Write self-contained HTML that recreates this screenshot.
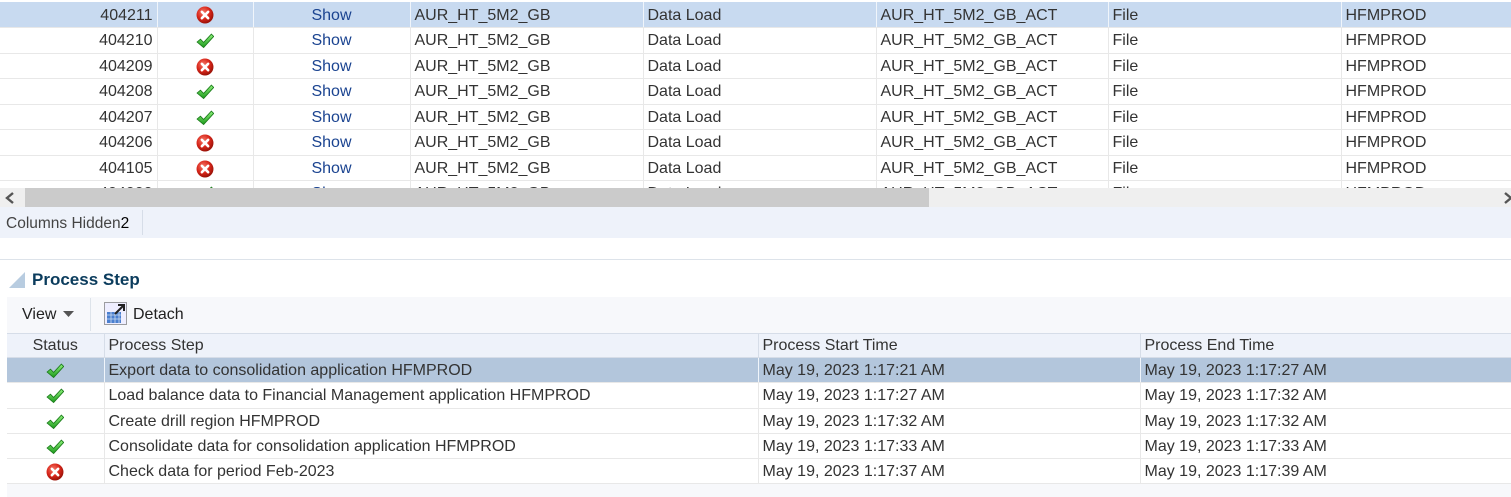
<!DOCTYPE html>
<html><head><meta charset="utf-8"><style>
*{margin:0;padding:0;box-sizing:border-box}
body{width:1511px;height:497px;overflow:hidden;background:#fff;font-family:Tahoma,"DejaVu Sans","Liberation Sans",sans-serif;font-size:15px;color:#333;position:relative}
.a{position:absolute}
table{border-collapse:collapse;table-layout:fixed;position:absolute}
td{white-space:nowrap;overflow:hidden;padding:1px 4px 0;border-right:1px solid #e8e8e8;border-bottom:1px solid #e8e8e8;height:25.5px;line-height:23px;font-family:"Liberation Sans",sans-serif;font-size:16px}
.r{text-align:right}.c{text-align:center}
.show{color:#1a4390}
.sel td{background:#c8daf0;border-right-color:#f0f5fb}
.ico{display:inline-block;width:18px;height:18px;vertical-align:middle}
.bt td{height:25.3px}
.bt .sel td{background:#b3c6dc}
.bt th{font-weight:normal;text-align:left;padding:1px 4px 0;height:24px;line-height:22px;background:#eef2fa;border-right:1px solid #d6dde8;border-bottom:1px solid #d6dde8;border-top:1px solid #d6dde8;font-family:"Liberation Sans",sans-serif;font-size:16px}
</style></head><body>
<svg width="0" height="0" style="position:absolute"><defs>
<radialGradient id="rg" cx="40%" cy="35%" r="65%"><stop offset="0" stop-color="#f57a6a"/><stop offset="0.6" stop-color="#d8261a"/><stop offset="1" stop-color="#9a1208"/></radialGradient>
<linearGradient id="gg" x1="0" y1="0" x2="0" y2="1"><stop offset="0" stop-color="#8ef07a"/><stop offset="1" stop-color="#1c9a1c"/></linearGradient>
<symbol id="x" viewBox="0 0 17 17"><circle cx="8.5" cy="8.5" r="8" fill="url(#rg)"/><path d="M5.5 5.5l6 6M11.5 5.5l-6 6" stroke="#fff" stroke-width="2.4" stroke-linecap="round"/></symbol>
<symbol id="v" viewBox="0 0 17 17"><path d="M1 9.5l3.2-2.7 3 3 7.3-7.8 2.2 2.2-9.5 10.5z" fill="url(#gg)" stroke="#1a7a1a" stroke-width="0.8"/></symbol>
</defs></svg>

<table style="left:0;top:2px;width:1520px">
<colgroup><col style="width:157px"><col style="width:96px"><col style="width:157px"><col style="width:233px"><col style="width:233px"><col style="width:232px"><col style="width:233px"><col style="width:179px"></colgroup>
<tr class="sel"><td class="r">404211</td><td class="c"><svg class="ico"><use href="#x"/></svg></td><td class="c show">Show</td><td>AUR_HT_5M2_GB</td><td>Data Load</td><td>AUR_HT_5M2_GB_ACT</td><td>File</td><td>HFMPROD</td></tr>
<tr><td class="r">404210</td><td class="c"><svg class="ico"><use href="#v"/></svg></td><td class="c show">Show</td><td>AUR_HT_5M2_GB</td><td>Data Load</td><td>AUR_HT_5M2_GB_ACT</td><td>File</td><td>HFMPROD</td></tr>
<tr><td class="r">404209</td><td class="c"><svg class="ico"><use href="#x"/></svg></td><td class="c show">Show</td><td>AUR_HT_5M2_GB</td><td>Data Load</td><td>AUR_HT_5M2_GB_ACT</td><td>File</td><td>HFMPROD</td></tr>
<tr><td class="r">404208</td><td class="c"><svg class="ico"><use href="#v"/></svg></td><td class="c show">Show</td><td>AUR_HT_5M2_GB</td><td>Data Load</td><td>AUR_HT_5M2_GB_ACT</td><td>File</td><td>HFMPROD</td></tr>
<tr><td class="r">404207</td><td class="c"><svg class="ico"><use href="#v"/></svg></td><td class="c show">Show</td><td>AUR_HT_5M2_GB</td><td>Data Load</td><td>AUR_HT_5M2_GB_ACT</td><td>File</td><td>HFMPROD</td></tr>
<tr><td class="r">404206</td><td class="c"><svg class="ico"><use href="#x"/></svg></td><td class="c show">Show</td><td>AUR_HT_5M2_GB</td><td>Data Load</td><td>AUR_HT_5M2_GB_ACT</td><td>File</td><td>HFMPROD</td></tr>
<tr><td class="r">404105</td><td class="c"><svg class="ico"><use href="#x"/></svg></td><td class="c show">Show</td><td>AUR_HT_5M2_GB</td><td>Data Load</td><td>AUR_HT_5M2_GB_ACT</td><td>File</td><td>HFMPROD</td></tr>
<tr><td class="r">404000</td><td class="c"><svg class="ico"><use href="#v"/></svg></td><td class="c show">Show</td><td>AUR_HT_5M2_GB</td><td>Data Load</td><td>AUR_HT_5M2_GB_ACT</td><td>File</td><td>HFMPROD</td></tr>
</table>

<div class="a" style="left:0;top:188px;width:1511px;height:19px;background:#efefef"></div>
<div class="a" style="left:25px;top:188px;width:904px;height:19px;background:#cbcbcb"></div>
<svg class="a" style="left:4px;top:191px" width="12" height="14"><path d="M9 2L3 7l6 5" stroke="#555" stroke-width="2.4" fill="none"/></svg>
<svg class="a" style="left:1502px;top:191px" width="12" height="14"><path d="M3 2l6 5-6 5" stroke="#555" stroke-width="2.4" fill="none"/></svg>
<div class="a" style="left:0;top:207px;width:1511px;height:31px;background:#eef2fa"></div>
<div class="a" style="left:6px;top:215px;font-family:'Liberation Sans',sans-serif;font-size:15.5px;color:#444">Columns Hidden<span style="color:#000">2</span></div>
<div class="a" style="left:142px;top:210px;width:1px;height:25px;background:#d6dde8"></div>
<div class="a" style="left:0;top:259px;width:1511px;height:1px;background:#dde3ea"></div>

<svg class="a" style="left:8px;top:271px" width="18" height="18"><path d="M17 1V17H1z" fill="#b8cce0"/></svg>
<div class="a" style="left:32px;top:270px;font-family:'Liberation Sans',sans-serif;font-weight:bold;font-size:17px;color:#0b3c5d">Process Step</div>

<div class="a" style="left:7px;top:297px;width:1504px;height:36px;background:#f7f8fb"></div>
<div class="a" style="left:22px;top:306px;font-family:'Liberation Sans',sans-serif;font-size:16px;color:#222">View</div>
<svg class="a" style="left:63px;top:311px" width="12" height="8"><path d="M0 0H11L5.5 6z" fill="#555"/></svg>
<div class="a" style="left:90px;top:298px;width:1px;height:33px;background:#dde3ea"></div>
<svg class="a" style="left:104px;top:302px" width="24" height="24"><rect x="0.5" y="0.5" width="22" height="22" fill="#eef" stroke="#444" stroke-dasharray="1 1"/><rect x="3" y="10" width="14" height="11" fill="#4a7fd0"/><path d="M3 13H17M3 17H17M7 10V21M11 10V21M15 10V21" stroke="#cde" stroke-width="0.8"/><path d="M11 12L20 3M14 3H20V9" stroke="#222" stroke-width="2" fill="none"/></svg>
<div class="a" style="left:133px;top:306px;font-family:'Liberation Sans',sans-serif;font-size:16px;color:#222">Detach</div>

<div class="a" style="left:7px;top:333px;width:1504px;height:164px;background:#f7f8fb"></div>
<table class="bt" style="left:7px;top:333px;width:1504px;background:#fff">
<colgroup><col style="width:97px"><col style="width:654px"><col style="width:382px"><col style="width:371px"></colgroup>
<tr><th style="text-align:center">Status</th><th>Process Step</th><th>Process Start Time</th><th>Process End Time</th></tr>
<tr class="sel"><td class="c"><svg class="ico"><use href="#v"/></svg></td><td>Export data to consolidation application HFMPROD</td><td>May 19, 2023 1:17:21 AM</td><td>May 19, 2023 1:17:27 AM</td></tr>
<tr><td class="c"><svg class="ico"><use href="#v"/></svg></td><td>Load balance data to Financial Management application HFMPROD</td><td>May 19, 2023 1:17:27 AM</td><td>May 19, 2023 1:17:32 AM</td></tr>
<tr><td class="c"><svg class="ico"><use href="#v"/></svg></td><td>Create drill region HFMPROD</td><td>May 19, 2023 1:17:32 AM</td><td>May 19, 2023 1:17:32 AM</td></tr>
<tr><td class="c"><svg class="ico"><use href="#v"/></svg></td><td>Consolidate data for consolidation application HFMPROD</td><td>May 19, 2023 1:17:33 AM</td><td>May 19, 2023 1:17:33 AM</td></tr>
<tr><td class="c"><svg class="ico"><use href="#x"/></svg></td><td>Check data for period Feb-2023</td><td>May 19, 2023 1:17:37 AM</td><td>May 19, 2023 1:17:39 AM</td></tr>
</table>
</body></html>
